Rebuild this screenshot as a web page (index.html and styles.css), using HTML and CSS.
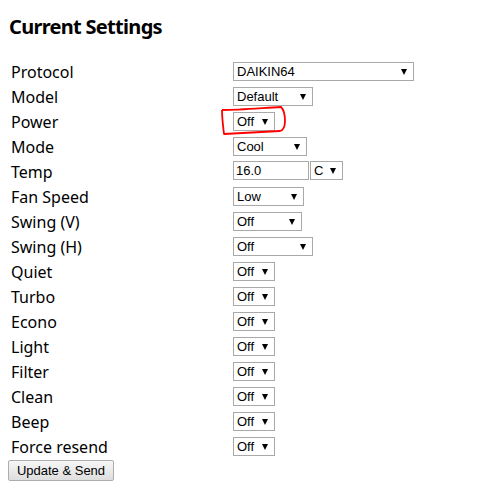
FILE: index.html
```html
<!DOCTYPE html>
<html>
<head>
<meta charset="utf-8">
<link rel="stylesheet" href="styles.css">
</head>
<body>
<h2 class="title">Current Settings</h2>
<form class="settings">
<table class="grid">
<tr><td class="lbl">Protocol</td><td><span class="sel w-proto"><select><option>DAIKIN64</option></select></span></td></tr>
<tr><td class="lbl">Model</td><td><span class="sel w-model"><select><option>Default</option></select></span></td></tr>
<tr><td class="lbl">Power</td><td><span class="sel w-off"><select><option>Off</option></select></span></td></tr>
<tr><td class="lbl">Mode</td><td><span class="sel w-mode"><select><option>Cool</option></select></span></td></tr>
<tr><td class="lbl">Temp</td><td><div class="temp"><input class="num" type="text" value="16.0"><span class="sel w-unit"><select><option>C</option></select></span></div></td></tr>
<tr><td class="lbl">Fan Speed</td><td><span class="sel w-fan"><select><option>Low</option></select></span></td></tr>
<tr><td class="lbl">Swing (V)</td><td><span class="sel w-swv"><select><option>Off</option></select></span></td></tr>
<tr><td class="lbl">Swing (H)</td><td><span class="sel w-swh"><select><option>Off</option></select></span></td></tr>
<tr><td class="lbl">Quiet</td><td><span class="sel w-off"><select><option>Off</option></select></span></td></tr>
<tr><td class="lbl">Turbo</td><td><span class="sel w-off"><select><option>Off</option></select></span></td></tr>
<tr><td class="lbl">Econo</td><td><span class="sel w-off"><select><option>Off</option></select></span></td></tr>
<tr><td class="lbl">Light</td><td><span class="sel w-off"><select><option>Off</option></select></span></td></tr>
<tr><td class="lbl">Filter</td><td><span class="sel w-off"><select><option>Off</option></select></span></td></tr>
<tr><td class="lbl">Clean</td><td><span class="sel w-off"><select><option>Off</option></select></span></td></tr>
<tr><td class="lbl">Beep</td><td><span class="sel w-off"><select><option>Off</option></select></span></td></tr>
<tr><td class="lbl">Force resend</td><td><span class="sel w-off"><select><option>Off</option></select></span></td></tr>
</table>
<button type="button" class="btn">Update &amp; Send</button>
</form>
<svg class="mark" width="492" height="500" viewBox="0 0 492 500">
<path d="M222,110 C240,110 262,108 281,107 C284,110 285,115 285,121 C285,126 284,130 280,131 C262,132 242,133 224,134 C223,126 222,118 222,110" fill="none" stroke="#f00" stroke-width="1.8" stroke-linejoin="round"/>
</svg>
</body>
</html>
```
FILE: styles.css
```css
body {
  margin: 8px;
  font-family: "Noto Sans", "Open Sans", sans-serif;
  color: #000;
  background: #fff;
  position: relative;
}
.title {
  margin: 5px 0 0 1px;
  font-size: 20px;
  line-height: 28px;
  font-weight: bold;
  letter-spacing: -0.7px;
}
.settings {
  margin: 16px 0 0 0;
}
.grid {
  border-collapse: separate;
  border-spacing: 2px;
}
.grid tr {
  height: 23px;
}
.grid td {
  padding: 0 1px;
  vertical-align: middle;
  font-size: 16px;
  line-height: 19px;
}
.grid td.lbl {
  width: 218px;
  padding-top: 4px;
  padding-bottom: 0;
}
.sel {
  position: relative;
  display: inline-block;
  vertical-align: middle;
  height: 19px;
}
.sel select {
  -webkit-appearance: none;
  appearance: none;
  width: 100%;
  height: 19px;
  box-sizing: border-box;
  border: 1px solid #a9a9a9;
  border-radius: 0;
  background: #fff;
  font-family: "Liberation Sans", Arial, sans-serif;
  font-size: 13px;
  color: #000;
  padding: 0 0 0 3px;
  margin: 0;
  display: block;
}
.sel::after {
  content: "";
  position: absolute;
  right: 7px;
  top: 7px;
  border-left: 3.5px solid transparent;
  border-right: 3.5px solid transparent;
  border-top: 6px solid #000;
  pointer-events: none;
}
.w-proto { width: 181px; }
.w-model { width: 80px; }
.w-off { width: 42px; }
.w-mode { width: 74px; }
.w-unit { width: 33px; }
.w-fan { width: 71px; }
.w-swv { width: 69px; }
.w-swh { width: 80px; }
.temp {
  display: flex;
  gap: 1px;
  align-items: center;
}
.num {
  width: 76px;
  height: 19px;
  box-sizing: border-box;
  border: 1px solid #a9a9a9;
  font-family: "Liberation Sans", Arial, sans-serif;
  font-size: 13px;
  padding: 0 2px;
  margin: 0;
  outline: none;
}
.btn {
  display: block;
  margin: 1px 0 0 0;
  height: 21px;
  width: 106px;
  padding: 0;
  border: 1px solid #adadad;
  border-radius: 2px;
  background: linear-gradient(#f6f6f6, #dedede);
  font-family: "Liberation Sans", Arial, sans-serif;
  font-size: 13px;
  color: #000;
}
.mark {
  position: absolute;
  left: -8px;
  top: -8px;
  pointer-events: none;
}
```
